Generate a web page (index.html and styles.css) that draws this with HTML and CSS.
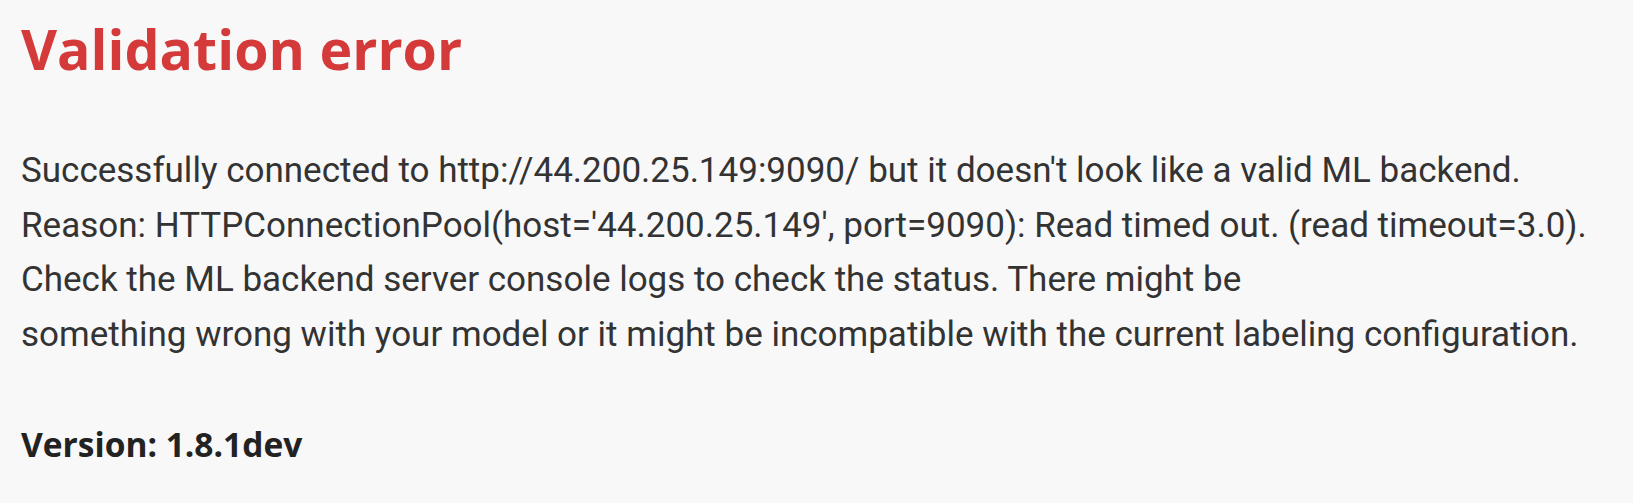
FILE: index.html
```
<!DOCTYPE html>
<html lang="en">
<head>
<meta charset="utf-8">
<title>Validation error</title>
<link rel="stylesheet" href="styles.css">
</head>
<body>
<main class="page">
  <h1 class="title">Validation error</h1>
  <p class="message">Successfully connected to http://44.200.25.149:9090/ but it doesn't look like a valid ML backend.<br>Reason: HTTPConnectionPool(host='44.200.25.149', port=9090): Read timed out. (read timeout=3.0).<br>Check the ML backend server console logs to check the status. There might be<br>something wrong with your model or it might be incompatible with the current labeling configuration.</p>
  <p class="version">Version: 1.8.1dev</p>
</main>
</body>
</html>
```
FILE: styles.css
```
html, body {
  margin: 0;
  padding: 0;
  background: #f8f8f8;
}
.page {
  padding: 0 21px;
}
.title {
  margin: 0;
  padding-top: 11px;
  font-family: "Open Sans", "Liberation Sans", sans-serif;
  font-weight: 700;
  font-size: 55.5px;
  line-height: 76px;
  color: #d53a3a;
}
.message {
  margin: 57px 0 0 0;
  font-family: Roboto, "Liberation Sans", sans-serif;
  font-size: 35px;
  line-height: 54.7px;
  color: #333333;
}
.version {
  margin: 54px 0 0 0;
  font-family: "Open Sans", "Liberation Sans", sans-serif;
  font-weight: 700;
  font-size: 33.5px;
  line-height: 55px;
  color: #222222;
}
```
